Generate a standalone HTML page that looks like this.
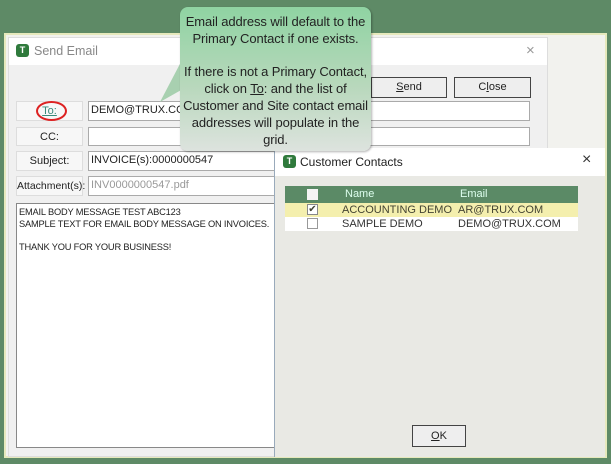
<!DOCTYPE html>
<html><head><style>
*{box-sizing:border-box;margin:0;padding:0}
body{width:611px;height:464px;background:#5e8a66;position:relative;overflow:hidden;font-family:"Liberation Sans",sans-serif;font-size:11px;color:#222}
.a{position:absolute}
.frame{left:4px;top:33px;width:603px;height:425px;background:#f2f2ee;border:2px solid #e6e9bc}
.lbl{background:#f7f7f7;border:1px solid #ddd;text-align:center;font-size:11px;line-height:18px}
.inp{background:#fff;border:1px solid #aaa;font-size:11px;line-height:17px;padding-left:2px;white-space:nowrap;overflow:hidden}
.btn{border:1px solid #444;background:#eee;text-align:center;line-height:18px;font-size:11px}
.logo{width:13px;height:13px;background:#2f7a3c;border-radius:3px;color:#fff;font-size:9px;font-weight:bold;text-align:center;line-height:13px}
</style></head><body>
<div class="a frame"></div>
<div class="a" style="left:8px;top:37px;width:540px;height:420px;background:#f0f0f0;border:1px solid #ddd"></div>
<div class="a" style="left:9px;top:38px;width:538px;height:27px;background:#fff"></div>
<div class="a logo" style="left:16px;top:44px">T</div>
<div class="a" style="left:34px;top:44px;color:#888;font-size:12.5px">Send Email</div>
<div class="a" style="left:526px;top:42px;color:#999;font-size:15px">×</div>
<div class="a btn" style="left:371px;top:77px;width:76px;height:21px"><u>S</u>end</div>
<div class="a btn" style="left:454px;top:77px;width:77px;height:21px">C<u>l</u>ose</div>
<div class="a lbl" style="left:16px;top:101px;width:67px;height:20px;color:#3a8a7a"><u>To:</u></div>
<div class="a" style="left:36px;top:101px;width:31px;height:20px;border:2px solid #d22;border-radius:50%"></div>
<div class="a lbl" style="left:16px;top:127px;width:67px;height:19px">CC:</div>
<div class="a lbl" style="left:16px;top:151px;width:67px;height:20px">Subject:</div>
<div class="a lbl" style="left:16px;top:176px;width:67px;height:20px;font-size:10.5px">Attachment(s):</div>
<div class="a inp" style="left:88px;top:101px;width:442px;height:20px">DEMO@TRUX.COM</div>
<div class="a inp" style="left:88px;top:127px;width:442px;height:19px"></div>
<div class="a inp" style="left:88px;top:151px;width:442px;height:20px">INVOICE(s):0000000547</div>
<div class="a inp" style="left:88px;top:176px;width:442px;height:20px;color:#999">INV0000000547.pdf</div>
<div class="a" style="left:16px;top:203px;width:260px;height:245px;background:#fff;border:1px solid #888;font-size:9.3px;line-height:11.5px;padding:3px 2px;white-space:nowrap;letter-spacing:-0.2px;overflow:hidden">EMAIL BODY MESSAGE TEST ABC123<br>SAMPLE TEXT FOR EMAIL BODY MESSAGE ON INVOICES.<br><br>THANK YOU FOR YOUR BUSINESS!</div>
<div class="a" style="left:274px;top:148px;width:331px;height:309px;background:#e9e9e4;border-left:1px solid #9ab"></div>
<div class="a" style="left:275px;top:148px;width:330px;height:28px;background:#fff"></div>
<div class="a logo" style="left:283px;top:155px">T</div>
<div class="a" style="left:300px;top:155px;font-size:12px">Customer Contacts</div>
<div class="a" style="left:582px;top:151px;font-size:16px;color:#333">×</div>
<div class="a" style="left:285px;top:186px;width:293px;height:17px;background:#5b8a66;color:#dfe;line-height:17px"><span class="a" style="left:22px;top:3px;width:11px;height:11px;background:#f4f4f4"></span><span class="a" style="left:60px">Name</span><span class="a" style="left:175px">Email</span></div>
<div class="a" style="left:285px;top:203px;width:293px;height:14px;background:#f4efae;color:#443;line-height:15px;font-size:11px"><span class="a" style="left:22px;top:1px;width:11px;height:11px;background:#fff;border:1px solid #888;font-size:10px;line-height:9px;text-align:center">✔</span><span class="a" style="left:57px">ACCOUNTING DEMO</span><span class="a" style="left:173px">AR@TRUX.COM</span></div>
<div class="a" style="left:285px;top:217px;width:293px;height:14px;background:#fff;color:#333;line-height:15px;font-size:11px"><span class="a" style="left:22px;top:1px;width:11px;height:11px;border:1px solid #999"></span><span class="a" style="left:57px">SAMPLE DEMO</span><span class="a" style="left:173px">DEMO@TRUX.COM</span></div>
<div class="a btn" style="left:412px;top:425px;width:54px;height:22px;line-height:20px"><u>O</u>K</div>
<svg class="a" style="left:155px;top:60px" width="40" height="50"><polygon points="27,0 5,42 35,25" fill="#a8d0b0"/></svg>
<div class="a" style="left:180px;top:7px;width:191px;height:144px;border-radius:8px;background:linear-gradient(#8fd3a2,#b8d8bc 55%,#dde3de);box-shadow:1px 1px 2px rgba(0,0,0,.3);text-align:center;font-size:13px;line-height:16.8px;color:#222;padding-top:7px;white-space:nowrap;letter-spacing:-0.1px">Email address will default to the<br>Primary Contact if one exists.<br><br>If there is not a Primary Contact,<br>click on <u>To</u>: and the list of<br>Customer and Site contact email<br>addresses will populate in the<br>grid.</div>
</body></html>
